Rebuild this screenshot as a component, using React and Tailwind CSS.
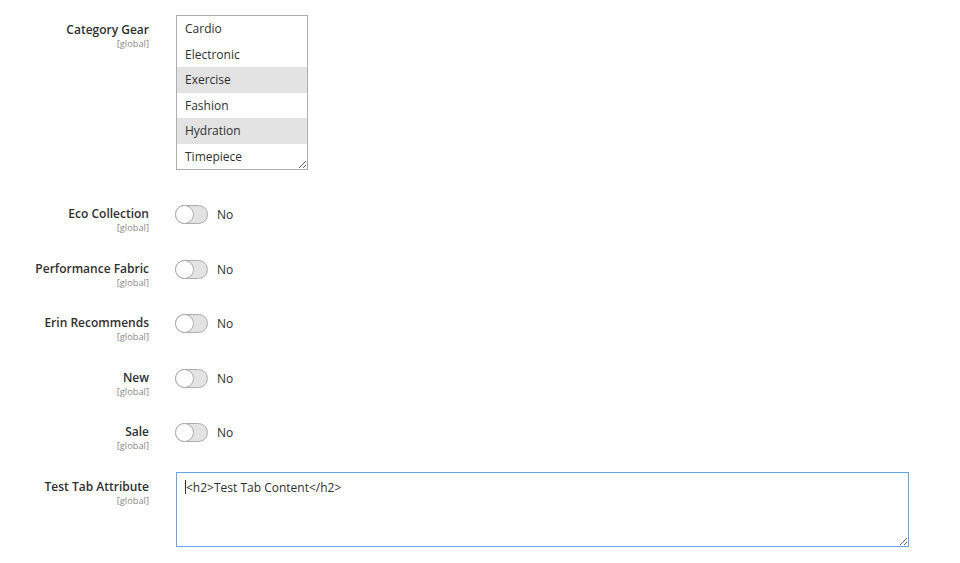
import React from "react";

const options = [
  { name: "Cardio", selected: false },
  { name: "Electronic", selected: false },
  { name: "Exercise", selected: true },
  { name: "Fashion", selected: false },
  { name: "Hydration", selected: true },
  { name: "Timepiece", selected: false },
];

const toggles = ["Eco Collection", "Performance Fabric", "Erin Recommends", "New", "Sale"];

const Label = ({ title }) => (
  <div className="w-[149px] shrink-0 text-right">
    <div className="text-[12px] font-semibold leading-[16px] text-[#303030]">{title}</div>
    <div className="text-[9.3px] leading-[11px] text-[#8a8a8a]">[global]</div>
  </div>
);

const Toggle = () => (
  <div className="relative h-[19px] w-[33px] rounded-full border border-[#adadad] bg-[#e3e3e3]">
    <span className="absolute -left-px -top-px h-[19px] w-[19px] rounded-full border border-[#adadad] bg-white" />
  </div>
);

export default function App() {
  return (
    <div
      className="min-h-[563px] w-[960px] bg-white pt-[15px]"
      style={{ fontFamily: '"Open Sans", sans-serif' }}
    >
      <div className="flex">
        <div className="pt-[7px]">
          <Label title="Category Gear" />
        </div>
        <div className="ml-[27px] h-[155px] w-[132px] resize overflow-auto border border-[#adadad] bg-white">
          {options.map((o) => (
            <div
              key={o.name}
              className={`h-[25.5px] pl-[8px] text-[12px] leading-[25.5px] text-[#303030] ${
                o.selected ? "bg-[#e3e3e3]" : ""
              }`}
            >
              {o.name}
            </div>
          ))}
        </div>
      </div>

      <div className="mt-[35px] flex flex-col">
        {toggles.map((t) => (
          <div key={t} className="flex h-[54.5px] items-start">
            <div className="pt-[1px]">
              <Label title={t} />
            </div>
            <div className="ml-[26px] flex items-center gap-[9px]">
              <Toggle />
              <span className="text-[12px] leading-[19px] text-[#303030]">No</span>
            </div>
          </div>
        ))}
      </div>

      <div className="mt-[-6px] flex">
        <div className="pt-[7px]">
          <Label title="Test Tab Attribute" />
        </div>
        <div className="ml-[27px] h-[75px] w-[733px] resize overflow-auto border border-[#66a6e8] bg-white px-[8px] pt-[5px] text-[12px] leading-[16px] text-[#303030]">
          <span className="inline-block h-[14px] w-px translate-y-[2px] bg-[#303030]" />
          {"<h2>Test Tab Content</h2>"}
        </div>
      </div>
    </div>
  );
}
